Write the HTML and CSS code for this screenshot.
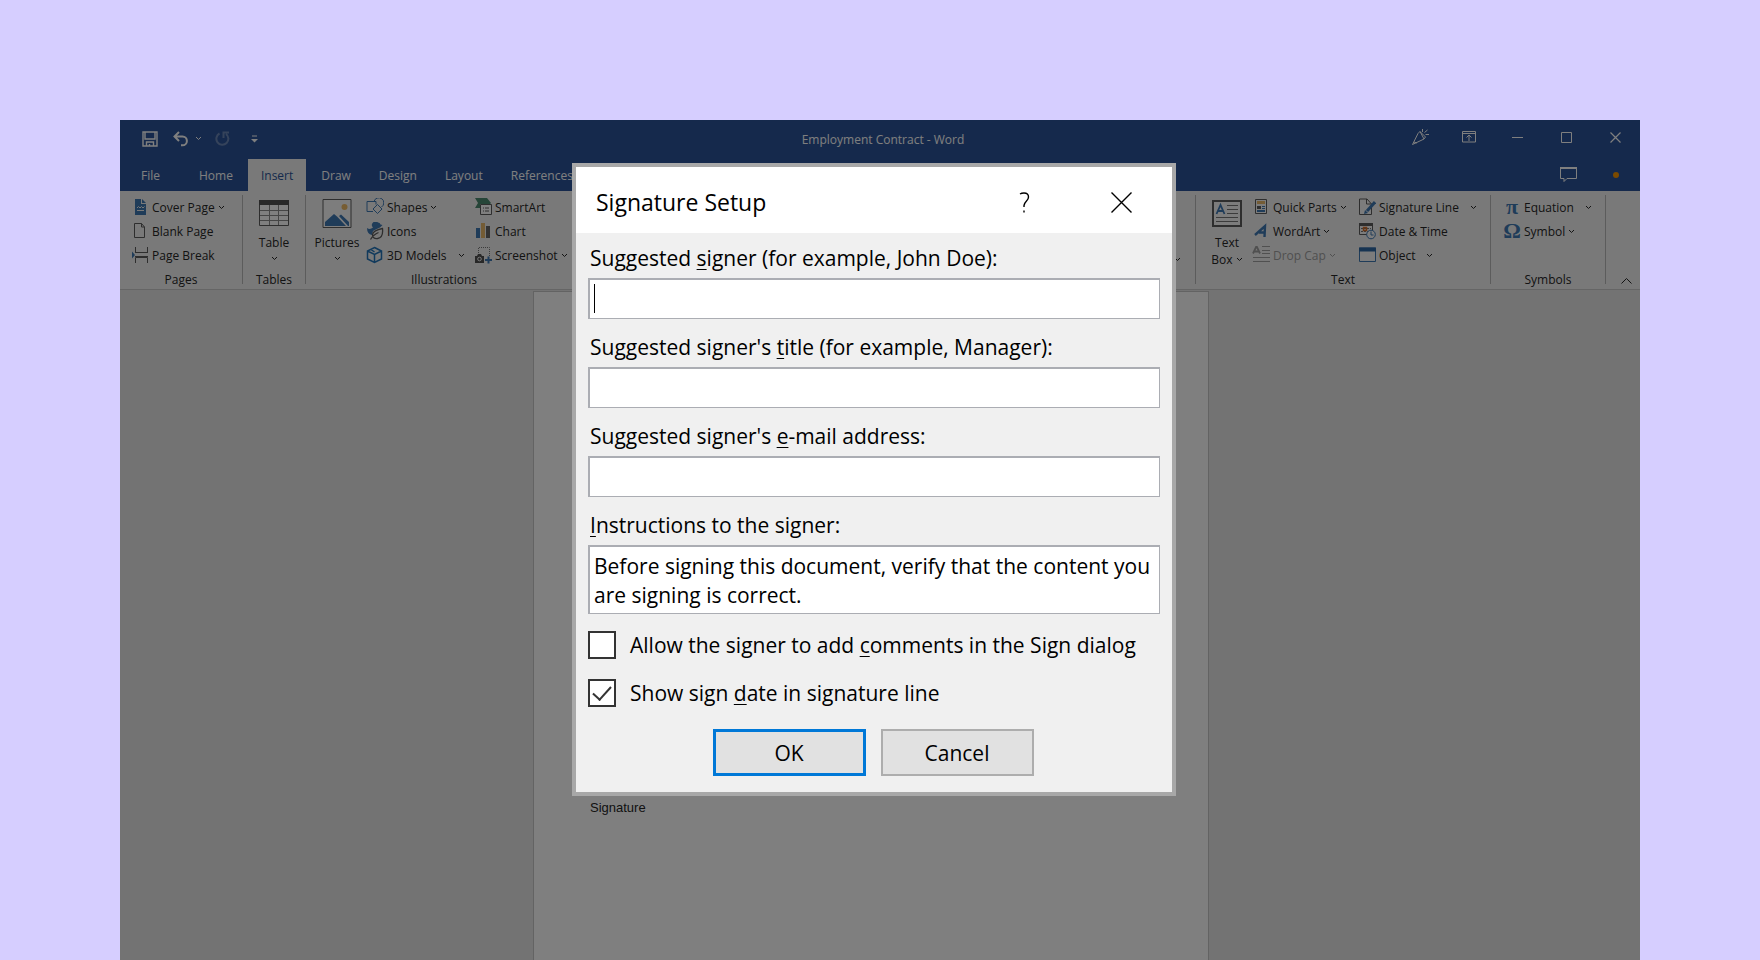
FILE: index.html
```html
<!DOCTYPE html>
<html lang="en">
<head>
  <meta charset="UTF-8" />
  <meta name="viewport" content="width=device-width, initial-scale=1.0"/>
  <title>Employment Contract - Word</title>
  <link rel="stylesheet" href="styles.css">
</head>
<body>

  <!-- Shared icons -->
  <svg class="sprite" aria-hidden="true">
    <symbol id="chevron" viewBox="0 0 7 5"><path d="M1 1l2.500 2.500L6 1" fill="none" stroke="currentColor"/></symbol>
  </svg>

  <div class="window">
    <!-- Title bar -->
    <header class="titlebar">
      <div class="quick">
        <button class="tool save" aria-label="Save">
          <svg width="16" height="16" viewBox="0 0 16 16" fill="none" stroke="currentColor" stroke-width="1.4"><path d="M1 1h14v14H1zM3 1v7h10V1M4.500 15v-4h7v4M7.500 13v2"/></svg>
        </button>
        <button class="tool undo" aria-label="Undo">
          <svg width="16" height="16" viewBox="0 0 16 16" fill="none" stroke="currentColor" stroke-width="2"><path d="M6 1L1.500 5.500 6 10M2 5.500h7.500a4.400 4.400 0 0 1 0 8.800H8"/></svg>
        </button>
        <button class="tool more" aria-label="Undo history"><svg class="chevron"><use href="#chevron"/></svg></button>
        <button class="tool redo" aria-label="Repeat" disabled>
          <svg width="15" height="15" viewBox="0 0 15 15" fill="none" stroke="currentColor" stroke-width="2"><path d="M4.500 2.500a6 6 0 1 0 6.500.5M8.500 7V1.500H14"/></svg>
        </button>
        <button class="tool" aria-label="Customize toolbar">
          <svg width="7" height="8" viewBox="0 0 7 8"><path d="M1 1h5" stroke="currentColor"/><path d="M0 4h7L3.500 7.500z" fill="currentColor"/></svg>
        </button>
      </div>
      <div class="doc-title">Employment Contract - Word</div>
      <div class="controls">
        <button class="control" aria-label="Coming soon">
          <svg width="18" height="18" viewBox="0 0 18 18" fill="none" stroke="currentColor"><path d="M7 5.500L1.500 16.500 13 11M7 5.500l2-2 5.500 5.500-1.500 2M3 14l3 1M9 3.500L13 11M11.500 4V1M13.500 4.500L16.500 2M14.500 6.500H18"/></svg>
        </button>
        <button class="control" aria-label="Ribbon display options">
          <svg width="14" height="12" viewBox="0 0 14 12" fill="none" stroke="currentColor"><path d="M.5.500h13v10.500H.5zM.5 2.500h13M7 10V4.500M4.500 6.500L7 4l2.500 2.500"/></svg>
        </button>
        <button class="control" aria-label="Minimize">
          <svg width="11" height="11" viewBox="0 0 11 11" stroke="currentColor"><path d="M0 5.500h11"/></svg>
        </button>
        <button class="control" aria-label="Maximize">
          <svg width="11" height="11" viewBox="0 0 11 11" fill="none" stroke="currentColor"><path d="M.5.500h10v10H.5z"/></svg>
        </button>
        <button class="control" aria-label="Close window">
          <svg width="11" height="11" viewBox="0 0 11 11" stroke="currentColor" stroke-width="1.200"><path d="M.5.500l10 10M10.500.500l-10 10"/></svg>
        </button>
      </div>
    </header>

    <!-- Tabs -->
    <nav class="tabs">
      <button class="tab file">File</button>
      <button class="tab">Home</button>
      <button class="tab active">Insert</button>
      <button class="tab">Draw</button>
      <button class="tab">Design</button>
      <button class="tab">Layout</button>
      <button class="tab">References</button>
      <button class="tab comments" aria-label="Comments">
        <svg width="17" height="16" viewBox="0 0 17 16" fill="none" stroke="currentColor"><path d="M.5 1h16v10.500H7l-3 3v-3H.5z"/><path d="M0 1h17" stroke-width="2"/></svg>
      </button>
      <span class="status-dot"></span>
    </nav>

    <!-- Ribbon -->
    <div class="ribbon">
      <section class="group pages">
        <div class="group-body">
          <div class="col">
            <button class="item">
              <svg class="icon" viewBox="0 0 18 18"><path d="M4 1h6v5h5v11H4z" fill="#3e78b3"/><path d="M11 1l4 4h-4z" fill="#3e78b3"/><path d="M6 10l1.500-1.500L9 10l1.500-1.500L12 10l1.500-1.500M6 12.500h7" fill="none" stroke="#f3f3f3"/></svg>
              Cover Page <svg class="chevron"><use href="#chevron"/></svg>
            </button>
            <button class="item">
              <svg class="icon" viewBox="0 0 18 18" fill="none" stroke="#5c5c5c"><path d="M3.500 1.500h7l3 3.500v10.500h-10zM10.500 1.500V5h3"/></svg>
              Blank Page
            </button>
            <button class="item">
              <svg class="icon" viewBox="0 0 18 18" fill="none" stroke="#5c5c5c"><path d="M4.500 1v5.500h12V1M4.500 17v-5.500h12V17"/><path d="M4 6.500h13M4 10.500h13"/><path d="M1 5.500v7L4 9z" fill="#3e78b3" stroke="none"/></svg>
              Page Break
            </button>
          </div>
        </div>
        <h2 class="group-name">Pages</h2>
      </section>

      <section class="group tables">
        <div class="group-body">
          <button class="big">
            <svg class="big-icon" viewBox="0 0 30 30"><path d="M.5 4h29v23.500H.5z" fill="#fff" stroke="#5c5c5c"/><path d="M0 2h30v5H0z" fill="#505050"/><path d="M10.500 7v20M19.500 7v20M1 12.500h28M1 17.500h28M1 22.500h28" stroke="#8a8a8a"/></svg>
            Table
            <svg class="chevron"><use href="#chevron"/></svg>
          </button>
        </div>
        <h2 class="group-name">Tables</h2>
      </section>

      <section class="group illustrations">
        <div class="group-body">
          <button class="big">
            <svg class="big-icon" viewBox="0 0 30 30"><path d="M1 1.500h28v28H1z" fill="#fafafa" stroke="#5c5c5c"/><circle cx="22.500" cy="9" r="3" fill="#eebb66"/><path d="M3 28v-4l9-8 3 2.500L24 28zM17 18l2-1.500L27 24v4h-1z" fill="#3e78b3"/></svg>
            Pictures
            <svg class="chevron"><use href="#chevron"/></svg>
          </button>
          <div class="col">
            <button class="item">
              <svg class="icon" viewBox="0 0 18 18" fill="none" stroke="#3e78b3"><path d="M7 13.500H1v-10h9v3"/><path d="M11.500 6.500l4.500 4.500-4.500 4.500L7 11z"/><path d="M8 3.500A5 5 0 1 1 15.500 9"/></svg>
              Shapes <svg class="chevron"><use href="#chevron"/></svg>
            </button>
            <button class="item">
              <svg class="icon" viewBox="0 0 18 18"><path d="M1 6q3 2 6-.5a3.500 3.500 0 0 1 5-5q2 0 2.500 2l2 .5-2.500 2.500Q10 7 7 9l-1 4Q1 12 1 6z" fill="#3e78b3"/><path d="M16.500 6.500q1 9-5 10-5 .5-5-4Q7 8.500 16.500 6.500zM4.500 17.500q3-5 8-7" fill="#f3f3f3" stroke="#5c5c5c" stroke-width="1.300"/></svg>
              Icons
            </button>
            <button class="item">
              <svg class="icon" viewBox="0 0 18 18" fill="none" stroke="#2374b9" stroke-width="1.500"><path d="M8.500 1.500L15.500 5v8l-7 3.500-7-3.500V5zM1.500 5l7 3.500 7-3.500M8.500 8.500v8M5 3.500L8.500 6"/></svg>
              3D Models <svg class="chevron far"><use href="#chevron"/></svg>
            </button>
          </div>
          <div class="col">
            <button class="item">
              <svg class="icon" viewBox="0 0 18 18"><path d="M1 0h12l4 5-1 1H6v4H1l3-5z" fill="#4c8a70"/><path d="M6.500 6.500h11v10h-11z" fill="#fff" stroke="#5c5c5c"/><path d="M9 10h1M11 10h4M9 13h1M11 13h4" stroke="#5c5c5c"/></svg>
              SmartArt
            </button>
            <button class="item">
              <svg class="icon" viewBox="0 0 18 18"><path d="M2 6h4v10H2z" fill="#3e78b3"/><path d="M7 1h4v15H7z" fill="#e9b96b"/><path d="M12 4h4v12h-4z" fill="#666"/></svg>
              Chart
            </button>
            <button class="item">
              <svg class="icon" viewBox="0 0 18 18"><path d="M4.500 9V1.500h11V10" fill="none" stroke="#777" stroke-dasharray="1 1"/><path d="M1 10h2l1-2h3l1 2h2v7H1z" fill="#505050"/><circle cx="5.500" cy="13" r="1.800" fill="none" stroke="#f3f3f3"/><path d="M14.500 10.500v7M11 14h7" stroke="#3e78b3" stroke-width="2"/></svg>
              Screenshot <svg class="chevron"><use href="#chevron"/></svg>
            </button>
          </div>
        </div>
        <h2 class="group-name">Illustrations</h2>
      </section>

      <section class="group filler">
        <svg class="chevron"><use href="#chevron"/></svg>
      </section>

      <section class="group text">
        <div class="group-body">
          <button class="big">
            <svg class="big-icon" viewBox="0 0 30 30"><path d="M1 3h28v25H1z" fill="#f8f8f8" stroke="#5c5c5c" stroke-width="2"/><path d="M4.500 16L8.500 7l4 9M6 13h5" fill="none" stroke="#3e78b3" stroke-width="1.800"/><path d="M15 7.500h11M15 11.500h11M15 15.500h11M4 19.500h22M4 23.500h22" stroke="#777"/></svg>
            Text
            <span>Box <svg class="chevron inline"><use href="#chevron"/></svg></span>
          </button>
          <div class="col">
            <button class="item">
              <svg class="icon" viewBox="0 0 18 18"><path d="M3.500 1.500h11v14h-11z" fill="#f8f8f8" stroke="#5c5c5c"/><path d="M5 3h8v3H5z" fill="#e9b96b"/><path d="M5 8h4v3H5z" fill="#5c5c5c"/><path d="M10 8.500h3M10 10.500h3" stroke="#3e78b3"/><path d="M5 12h8v2H5z" fill="#3e78b3"/></svg>
              Quick Parts <svg class="chevron"><use href="#chevron"/></svg>
            </button>
            <button class="item">
              <svg class="icon" viewBox="0 0 18 18" fill="none" stroke="#3e78b3" stroke-width="2.400"><path d="M3 13L13 4l-.5 11M7 10.500h6"/></svg>
              WordArt <svg class="chevron"><use href="#chevron"/></svg>
            </button>
            <button class="item" disabled>
              <svg class="icon" viewBox="0 0 18 18" fill="none" stroke="#a0a0a0"><path d="M1 7.500L4.500 0 8 7.500M2.500 5.500h4" stroke-width="1.800"/><path d="M10 .500h8M10 4.500h8M10 7.500h8M1 11.500h17M1 15.500h17"/></svg>
              Drop Cap <svg class="chevron"><use href="#chevron"/></svg>
            </button>
          </div>
          <div class="col">
            <button class="item">
              <svg class="icon" viewBox="0 0 18 18"><path d="M1.500 1v15.500h12V6L9 1zM8.500 1v5h5" fill="#f8f8f8" stroke="#5c5c5c"/><path d="M17 4L9 13" stroke="#3e78b3" stroke-width="3"/><path d="M6 16l1-4 3 3z" fill="#3e78b3"/></svg>
              Signature Line <svg class="chevron far"><use href="#chevron"/></svg>
            </button>
            <button class="item">
              <svg class="icon" viewBox="0 0 18 18"><path d="M1.500 1.500h13v11h-13z" fill="#f8f8f8" stroke="#5c5c5c"/><path d="M1 2.500h14" stroke="#5c5c5c" stroke-width="3"/><path d="M3 6.500h10M3 9.500h10" stroke="#777" stroke-dasharray="2 1"/><path d="M5.500 5.500h3v3h-3z" fill="none" stroke="#d8702a" stroke-width="1.500"/><circle cx="13" cy="12.500" r="4.300" fill="#f8f8f8" stroke="#3e78b3"/><path d="M13 9.500v3.500h2.500" fill="none" stroke="#3e78b3"/></svg>
              Date &amp; Time
            </button>
            <button class="item">
              <svg class="icon" viewBox="0 0 18 18"><path d="M1.500 2h16v13.500h-16z" fill="#f8f8f8" stroke="#3e78b3"/><path d="M1 1.500h17v4H1z" fill="#2f69a5"/></svg>
              Object <svg class="chevron far"><use href="#chevron"/></svg>
            </button>
          </div>
        </div>
        <h2 class="group-name">Text</h2>
      </section>

      <section class="group symbols">
        <div class="group-body">
          <div class="col">
            <button class="item"><span class="icon glyph">π</span> Equation <svg class="chevron far"><use href="#chevron"/></svg></button>
            <button class="item"><span class="icon glyph">Ω</span> Symbol <svg class="chevron"><use href="#chevron"/></svg></button>
          </div>
        </div>
        <h2 class="group-name">Symbols</h2>
      </section>

      <button class="collapse" aria-label="Collapse the ribbon">
        <svg width="11" height="6" viewBox="0 0 11 6" fill="none" stroke="currentColor"><path d="M.5 5.500l5-5 5 5"/></svg>
      </button>
    </div>

    <!-- Document -->
    <main class="canvas">
      <div class="paper">
        <p>Signature</p>
      </div>
    </main>

    <!-- Signature dialog -->
    <div class="backdrop">
      <form class="dialog" role="dialog" aria-labelledby="dialogTitle">
        <div class="dialog-head">
          <h1 id="dialogTitle">Signature Setup</h1>
          <button type="button" class="head-btn" aria-label="Help">
            <svg width="11" height="21" viewBox="0 0 11 21" fill="none" stroke="currentColor" stroke-width="1.400"><path d="M1 2Q2.500 1 5 1q4.500 0 4.500 4 0 2-2 4T5 13.500V15M5 18.500v2"/></svg>
          </button>
          <button type="button" class="head-btn" aria-label="Close">
            <svg width="21" height="21" viewBox="0 0 21 21" stroke="currentColor" stroke-width="1.400"><path d="M.5.500l20 20M20.500.500l-20 20"/></svg>
          </button>
        </div>
        <div class="dialog-body">
          <div class="form-group">
            <label for="signer">Suggested <u>s</u>igner (for example, John Doe):</label>
            <div class="field">
              <input type="text" id="signer" />
              <span class="caret"></span>
            </div>
          </div>
          <div class="form-group">
            <label for="signerTitle">Suggested signer's <u>t</u>itle (for example, Manager):</label>
            <input type="text" id="signerTitle" />
          </div>
          <div class="form-group">
            <label for="signerEmail">Suggested signer's <u>e</u>-mail address:</label>
            <input type="text" id="signerEmail" />
          </div>
          <div class="form-group">
            <label for="instructions"><u>I</u>nstructions to the signer:</label>
            <textarea id="instructions">Before signing this document, verify that the content you are signing is correct.</textarea>
          </div>
          <div class="check-row">
            <input type="checkbox" id="allowComments" />
            <label for="allowComments">Allow the signer to add <u>c</u>omments in the Sign dialog</label>
          </div>
          <div class="check-row">
            <input type="checkbox" id="showDate" checked />
            <label for="showDate">Show sign <u>d</u>ate in signature line</label>
          </div>
          <div class="actions">
            <button type="button" class="btn primary">OK</button>
            <button type="button" class="btn">Cancel</button>
          </div>
        </div>
      </form>
    </div>
  </div>

</body>
</html>
```
FILE: styles.css
```css
:root {
  --page-bg: #d6ceff;
  --word-blue: #2b5398;
  --ribbon-bg: #f3f3f3;
  --canvas-bg: #e6e6e6;
  --line: #b8b8b8;
  --dialog-bg: #f0f0f0;
  --input-border: #abadb3;
  --accent: #0078d7;
}

* {
  box-sizing: border-box;
}

body {
  margin: 0;
  min-height: 100vh;
  padding: 120px 120px 0;
  display: flex;
  background-color: var(--page-bg);
  font-family: "Open Sans", "Noto Sans", sans-serif;
  font-size: 12px;
  color: #262626;
}

button {
  padding: 0;
  border: none;
  background: none;
  font: inherit;
  color: inherit;
}

svg {
  flex: none;
}

.sprite {
  position: absolute;
  width: 0;
  height: 0;
}

.window {
  position: relative;
  flex: 1;
  min-width: 0;
  display: flex;
  flex-direction: column;
}

/* Title bar */
.titlebar {
  height: 39px;
  display: grid;
  grid-template-columns: 1fr auto 1fr;
  align-items: center;
  background-color: var(--word-blue);
  color: #fff;
}

.quick {
  display: flex;
  align-items: center;
  padding: 0 0 2px 22px;
}

.tool {
  display: flex;
  margin-right: 15px;
}

.tool.undo {
  margin-right: 6px;
}

.tool.more {
  margin-right: 13px;
}

.tool.redo {
  margin-right: 21px;
  opacity: 0.3;
}

.doc-title {
  padding-left: 6px;
}

.controls {
  align-self: start;
  display: flex;
  justify-content: flex-end;
}

.control {
  width: 49px;
  height: 34px;
  display: flex;
  align-items: center;
  justify-content: center;
}

/* Tabs */
.tabs {
  height: 32px;
  display: flex;
  gap: 2px;
  background-color: var(--word-blue);
  color: #fff;
}

.tab {
  padding: 0 13px;
}

.tab.file {
  padding: 0 24px 0 21px;
}

.tab.active {
  background-color: var(--ribbon-bg);
  color: var(--word-blue);
}

.tab.comments {
  margin-left: auto;
  display: flex;
  align-items: center;
}

.status-dot {
  align-self: center;
  width: 6px;
  height: 6px;
  margin: 0 21px;
  border-radius: 50%;
  background-color: #f79400;
}

/* Ribbon */
.ribbon {
  height: 99px;
  display: flex;
  padding-top: 4px;
  background-color: var(--ribbon-bg);
  border-bottom: 1px solid #cacaca;
}

.group {
  display: flex;
  flex-direction: column;
  height: 89px;
  border-right: 1px solid var(--line);
}

.group-body {
  flex: none;
  display: flex;
  height: 76px;
}

.group-name {
  margin: 0;
  font-size: 12px;
  font-weight: 400;
  line-height: 18px;
  text-align: center;
}

.pages {
  width: 123px;
  padding-left: 11px;
}

.pages .group-name {
  margin-left: -11px;
}

.tables {
  width: 63px;
}

.tables .big {
  flex: 1;
}

.illustrations {
  width: 276px;
  border-right: none;
}

.illustrations .big {
  padding-left: 2px;
}

.filler {
  flex: 1;
  align-items: flex-end;
  padding: 62px 14px 0 0;
}

.text {
  width: 295px;
}

.text .group-body {
  padding-left: 6px;
}

.text .big {
  width: 50px;
}

.symbols {
  width: 115px;
  padding-left: 12px;
}

.symbols .group-name {
  margin-left: -12px;
}

.col {
  display: flex;
  flex-direction: column;
}

.illustrations .col {
  width: 108px;
}

.text .col {
  width: 106px;
}

.item {
  height: 24px;
  display: flex;
  align-items: center;
  gap: 3px;
  white-space: nowrap;
}

.item:disabled {
  color: #a0a0a0;
}

.icon {
  width: 18px;
  height: 18px;
}

.glyph {
  font: bold 22px/18px "Liberation Serif", serif;
  color: #3e78b3;
  text-align: center;
}

.chevron {
  width: 7px;
  height: 5px;
  color: currentColor;
}

.chevron.far {
  margin-left: 8px;
}

.chevron.inline {
  vertical-align: 2px;
}

.big {
  width: 60px;
  display: flex;
  flex-direction: column;
  align-items: center;
  line-height: 17px;
}

.big-icon {
  width: 30px;
  height: 30px;
  margin: 3px 0 6px;
}

.big > .chevron {
  margin-top: 5px;
}

.collapse {
  display: flex;
  align-self: flex-end;
  padding: 0 8px 5px 15px;
}

/* Document */
.canvas {
  flex: 1;
  display: flex;
  padding: 1px 431px 0 413px;
  background-color: var(--canvas-bg);
}

.paper {
  flex: 1;
  padding: 507px 56px 0;
  background-color: #fff;
  border: 1px solid #c6c6c6;
  border-bottom: none;
  font-family: "Liberation Sans", Arial, sans-serif;
  font-size: 13px;
  line-height: 17px;
}

.paper p {
  margin: 0;
}

/* Dialog */
.backdrop {
  position: absolute;
  inset: 0;
  display: flex;
  justify-content: center;
  align-items: flex-start;
  padding: 43px 12px 0 0;
  background-color: rgba(0, 0, 0, 0.5);
}

.dialog {
  width: 604px;
  border: 4px solid #a8a8a8;
  background-color: var(--dialog-bg);
  color: #000;
  font-size: 21px;
}

.dialog-head {
  height: 66px;
  display: flex;
  align-items: center;
  padding: 4px 2px 0 20px;
  background-color: #fff;
}

.dialog-head h1 {
  flex: 1;
  margin: 0;
  font-size: 23px;
  font-weight: 400;
}

.head-btn {
  width: 97px;
  height: 60px;
  display: flex;
  align-items: center;
  justify-content: center;
}

.dialog-body {
  padding: 10px 12px 16px;
}

.form-group {
  margin-bottom: 13px;
}

.form-group label {
  display: block;
  margin-bottom: 5px;
  padding-left: 2px;
  line-height: 30px;
}

u {
  text-decoration-thickness: 1px;
  text-underline-offset: 3px;
}

.field {
  position: relative;
}

.form-group input,
.form-group textarea {
  display: block;
  width: 100%;
  height: 41px;
  padding: 0 5px;
  border: 1px solid var(--input-border);
  border-width: 2px 1px 1px 2px;
  border-radius: 0;
  background-color: #fff;
  color: #000;
  font: inherit;
  outline: none;
}

.form-group textarea {
  height: 69px;
  padding: 5px 4px;
  line-height: 29px;
  resize: none;
  overflow: hidden;
}

.caret {
  position: absolute;
  top: 6px;
  left: 6px;
  width: 1px;
  height: 29px;
  background-color: #000;
}

.check-row {
  display: flex;
  align-items: center;
  gap: 14px;
  height: 28px;
  margin: 17px 0 20px;
}

.check-row + .check-row {
  margin-top: 0;
}

.check-row input {
  appearance: none;
  width: 28px;
  height: 28px;
  margin: 0;
  display: grid;
  place-items: center;
  border: 2px solid #333;
  background-color: #fff;
}

.check-row input:checked::before {
  content: "";
  width: 8px;
  height: 16px;
  margin-bottom: 5px;
  border: solid #333;
  border-width: 0 2px 2px 0;
  transform: rotate(42deg);
}

.actions {
  display: flex;
  justify-content: center;
  gap: 15px;
  padding: 2px 2px 0 0;
}

.btn {
  width: 153px;
  height: 47px;
  border: 2px solid #adadad;
  background-color: #e1e1e1;
}

.btn.primary {
  border: 3px solid var(--accent);
}
```
